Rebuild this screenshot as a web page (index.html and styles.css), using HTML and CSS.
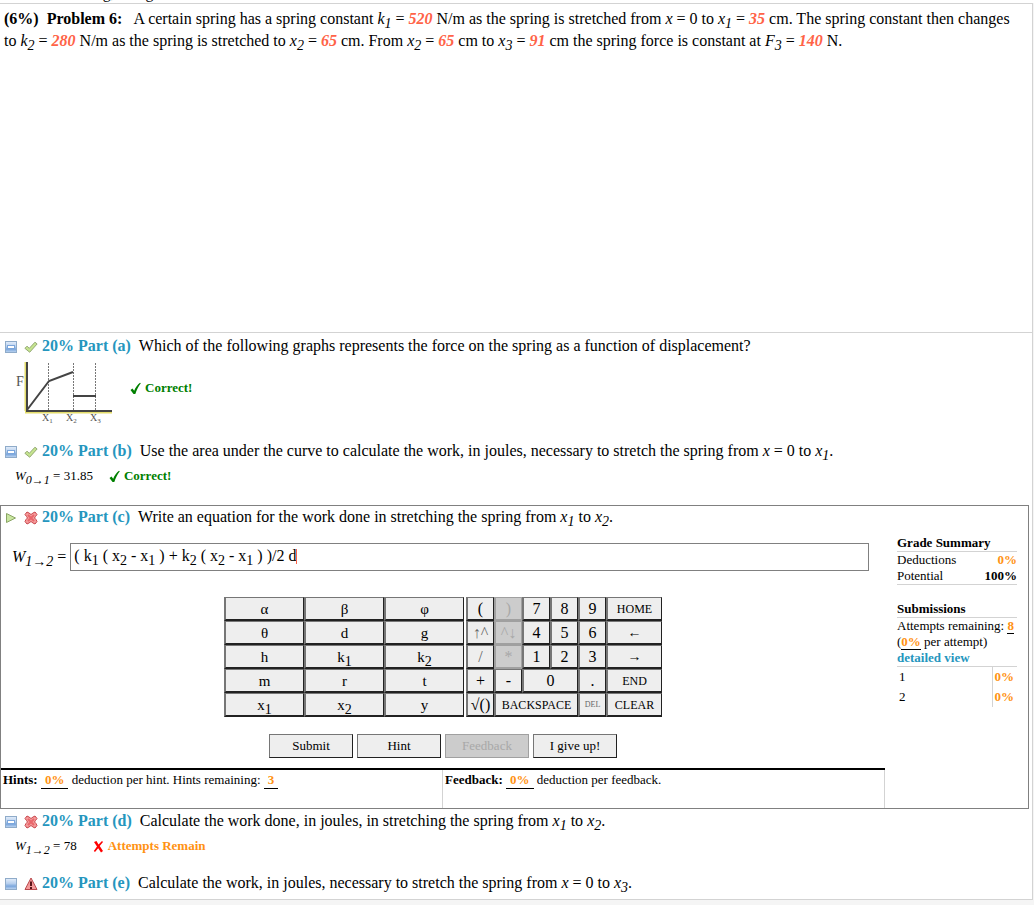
FILE: index.html
```html
<!DOCTYPE html>
<html lang="en">
<head>
<meta charset="utf-8">
<title>Problem 6</title>
<link rel="stylesheet" href="styles.css">
</head>
<body>
<svg class="defs" aria-hidden="true">
  <defs>
    <linearGradient id="boxfill" x1="0" y1="0" x2="0" y2="1"><stop offset="0" stop-color="#e4eefb"/><stop offset=".45" stop-color="#b8d0ee"/><stop offset=".7" stop-color="#7ba6dc"/><stop offset="1" stop-color="#c3d9f3"/></linearGradient>
    <symbol id="minus" viewBox="0 0 12 12"><rect x=".5" y=".5" width="11" height="11" fill="url(#boxfill)" stroke="#8fabc9"/><rect x="2.500" y="4.500" width="7" height="3" fill="#fff" stroke="#7ba6dc"/></symbol>
    <symbol id="blank" viewBox="0 0 12 12"><rect x=".5" y=".5" width="11" height="11" fill="url(#boxfill)" stroke="#8fabc9"/></symbol>
    <symbol id="check" viewBox="0 0 16 14"><path d="M1 8.500 3.500 6 6 8.500 12.500 1.500 15 3.500 6.500 13Z" fill="#c5e48f" stroke="#8a9f6a" stroke-linejoin="round"/></symbol>
    <symbol id="cross" viewBox="0 0 14 14"><path d="M1 3.500 3 1 5 2 7 3.500 9 2 11 1 13 3.500 11.500 5.500 10.500 7 12 8.500 13 10.500 11 13 9 12 7 10.500 5 12 3 13 1 10.500 2 8.500 3.500 7 2.500 5.500Z" fill="#f49a9a" stroke="#c9474d" stroke-linejoin="round"/><path d="M4 4l6 6M10 4l-6 6" stroke="#e8666b" stroke-width="2"/></symbol>
    <symbol id="play" viewBox="0 0 12 12"><path d="M1.500 1.500 10.500 6 1.500 10.500Z" fill="#c9e6a0" stroke="#8aa565" stroke-linejoin="round"/></symbol>
    <symbol id="warn" viewBox="0 0 14 14"><path d="M7 1 13 12.500H1Z" fill="#f49a9a" stroke="#b8474b" stroke-linejoin="round"/><path d="M7 4.500V9M7 10v2" stroke="#5a1518" stroke-width="2"/></symbol>
    <symbol id="tick" viewBox="0 0 11 13"><path d="M.5 8 2.500 6.500 4.200 8.800C5.500 5.500 7.500 2.500 10 .8L10.800 1.200C8.300 4.500 6.500 8.500 5.300 12H3.500Z" fill="#008000"/></symbol>
    <symbol id="wrong" viewBox="0 0 11 13"><path d="M1 2 3.500 1 5.500 4.500 9 1 10 2 6.700 6 10 11 8 12.500 5.200 8.200 2 12 .8 11 4 6.500Z" fill="#f00"/></symbol>
  </defs>
</svg>
<div class="previous">Stretching, using</div>
<main class="problem">
  <section class="statement"><b>(6%)&nbsp; Problem 6:</b> &nbsp; A certain spring has a spring constant <i>k<sub>1</sub></i> = <em>520</em> N/m as the spring is stretched from <i>x</i> = 0 to <i>x<sub>1</sub></i> = <em>35</em> cm. The spring constant then changes to <i>k<sub>2</sub></i> = <em>280</em> N/m as the spring is stretched to <i>x<sub>2</sub></i> = <em>65</em> cm. From <i>x<sub>2</sub></i> = <em>65</em> cm to <i>x<sub>3</sub></i> = <em>91</em> cm the spring force is constant at <i>F<sub>3</sub></i> = <em>140</em> N.</section>

  <section class="part part-a">
    <h2 class="part-head"><button class="toggle" aria-label="Collapse part a"><svg class="ic"><use href="#minus"/></svg></button><svg class="status"><use href="#check"/></svg><span class="label">20% Part (a)</span><span class="question">Which of the following graphs represents the force on the spring as a function of displacement?</span></h2>
    <div class="graph-row">
      <svg class="graph" viewBox="0 0 100 66" role="img" aria-label="Force versus displacement">
        <path d="M12 2V51M11 52H98" stroke="#e3dc6a" stroke-width="3" fill="none"/>
        <path d="M13 2V51H98" stroke="#444" stroke-width="2" fill="none"/>
        <path d="M34.500 3V50M59.500 3V50M81.500 3V50" stroke="#777" stroke-dasharray="2 1" fill="none"/>
        <path d="M13 50 35 21 59 12M59 36H82" stroke="#444" stroke-width="2" fill="none"/>
        <text x="2" y="26" class="g-f">F</text>
        <text x="28" y="61" class="g-x">X<tspan dy="2" class="g-s">1</tspan></text>
        <text x="52" y="61" class="g-x">X<tspan dy="2" class="g-s">2</tspan></text>
        <text x="76" y="61" class="g-x">X<tspan dy="2" class="g-s">3</tspan></text>
      </svg>
      <span class="verdict ok"><svg class="mark"><use href="#tick"/></svg>Correct!</span>
    </div>
  </section>

  <section class="part part-b">
    <h2 class="part-head"><button class="toggle" aria-label="Collapse part b"><svg class="ic"><use href="#minus"/></svg></button><svg class="status"><use href="#check"/></svg><span class="label">20% Part (b)</span><span class="question">Use the area under the curve to calculate the work, in joules, necessary to stretch the spring from <i>x</i> = 0 to <i>x<sub>1</sub></i>.</span></h2>
    <div class="answer"><span><i>W<sub>0→1</sub></i> = 31.85</span><span class="verdict ok"><svg class="mark"><use href="#tick"/></svg>Correct!</span></div>
  </section>

  <section class="part part-c">
    <h2 class="part-head"><button class="toggle" aria-label="Collapse part c"><svg class="ic"><use href="#play"/></svg></button><svg class="status"><use href="#cross"/></svg><span class="label">20% Part (c)</span><span class="question">Write an equation for the work done in stretching the spring from <i>x<sub>1</sub></i> to <i>x<sub>2</sub></i>.</span></h2>
    <div class="work">
      <div class="entry">
        <div class="equation"><span id="eq-label"><i>W<sub>1→2</sub></i> =</span><div class="field" role="textbox" tabindex="0" aria-labelledby="eq-label">( k<sub>1</sub> ( x<sub>2</sub> - x<sub>1</sub> ) + k<sub>2</sub> ( x<sub>2</sub> - x<sub>1</sub> ) )/2 d<span class="caret"></span></div></div>
        <div class="pads">
          <div class="pad symbols"><button>α</button><button>β</button><button>φ</button><button>θ</button><button>d</button><button>g</button><button>h</button><button><span>k<sub>1</sub></span></button><button><span>k<sub>2</sub></span></button><button>m</button><button>r</button><button>t</button><button><span>x<sub>1</sub></span></button><button><span>x<sub>2</sub></span></button><button>y</button></div>
          <div class="pad numbers"><button>(</button><button disabled>)</button><button>7</button><button>8</button><button>9</button><button class="word">HOME</button><button class="dim">↑^</button><button disabled>^↓</button><button>4</button><button>5</button><button>6</button><button class="arrow">←</button><button class="dim">/</button><button disabled>*</button><button>1</button><button>2</button><button>3</button><button class="arrow">→</button><button>+</button><button>-</button><button class="wide2">0</button><button>.</button><button class="word">END</button><button class="root">√()</button><button class="word wide3">BACKSPACE</button><button class="tiny">DEL</button><button class="word">CLEAR</button></div>
        </div>
        <div class="actions"><button>Submit</button><button>Hint</button><button disabled>Feedback</button><button>I give up!</button></div>
      </div>
      <aside class="summary">
        <h3>Grade Summary</h3>
        <div class="rows"><div><span>Deductions</span><b class="pct">0%</b></div><div><span>Potential</span><b>100%</b></div></div>
        <h3>Submissions</h3>
        <div class="attempts">Attempts remaining: <b class="pct line">8</b><br>(<b class="pct line">0%</b> per attempt)<br><a href="#detail">detailed view</a></div>
        <table class="tries"><tr><td>1</td><td class="pct">0%</td></tr><tr><td>2</td><td class="pct">0%</td></tr></table>
      </aside>
    </div>
    <div class="foot"><div><b>Hints:</b> <b class="pct blank">0%</b> deduction per hint. Hints remaining: <b class="pct blank">3</b></div><div><b>Feedback:</b> <b class="pct blank">0%</b> deduction per feedback.</div></div>
  </section>

  <section class="part part-d">
    <h2 class="part-head"><button class="toggle" aria-label="Collapse part d"><svg class="ic"><use href="#minus"/></svg></button><svg class="status"><use href="#cross"/></svg><span class="label">20% Part (d)</span><span class="question">Calculate the work done, in joules, in stretching the spring from <i>x<sub>1</sub></i> to <i>x<sub>2</sub></i>.</span></h2>
    <div class="answer"><span><i>W<sub>1→2</sub></i> = 78</span><span class="verdict remain"><svg class="mark"><use href="#wrong"/></svg>Attempts Remain</span></div>
  </section>

  <section class="part part-e">
    <h2 class="part-head"><button class="toggle" aria-label="Expand part e"><svg class="ic"><use href="#blank"/></svg></button><svg class="status"><use href="#warn"/></svg><span class="label">20% Part (e)</span><span class="question">Calculate the work, in joules, necessary to stretch the spring from <i>x</i> = 0 to <i>x<sub>3</sub></i>.</span></h2>
  </section>
</main>
</body>
</html>
```
FILE: styles.css
```css
* { box-sizing: border-box; }
body { margin: 0; background: #f5f5f5; color: #000; font: 15px/22px "Liberation Serif", "Times New Roman", serif; }
button { font: inherit; color: inherit; padding: 0; }
.defs { position: absolute; width: 0; height: 0; }
sub { font-size: 14px; line-height: 0; vertical-align: -4px; }
.previous { height: 3px; padding-left: 45px; display: flex; align-items: flex-end; font-size: 16px; line-height: 20px; overflow: hidden; background: #fff; }
.problem { background: #fff; border: 1px solid #d3d3d3; border-left: 0; margin-right: 1px; }
.statement { min-height: 329px; padding: 4px 16px 0 4px; font-size: 16px; border-bottom: 1px solid #d3d3d3; }
.statement em { color: #ff6347; font-weight: bold; }

.part-head { display: flex; align-items: center; margin: 0; font-size: 16px; line-height: 22px; font-weight: normal; }
.toggle { display: flex; width: 12px; height: 12px; margin: 2px 7px 0 5px; border: 0; background: none; }
.ic { width: 12px; height: 12px; }
.status { width: 14px; height: 14px; margin: 2px 4px 0 0; }
.label { color: #2596be; font-weight: bold; margin-right: 8px; }
.part-a { padding-top: 2px; min-height: 107px; }
.part-b { min-height: 65px; }
.part-d { padding-top: 1px; min-height: 63px; }
.part-e { min-height: 27px; }
.graph-row { display: flex; align-items: center; gap: 16px; padding: 3px 0 0 14px; }
.graph { width: 100px; height: 66px; margin-bottom: -2px; }
.graph text { fill: #555; }
.g-f { font-size: 14px; }
.g-x { font-size: 10px; }
.g-s { font-size: 7px; }
.verdict { display: flex; align-items: center; gap: 4px; font-size: 13px; font-weight: bold; }
.graph-row .verdict { margin-bottom: 8px; }
.mark { width: 11px; height: 13px; }
.ok { color: #008000; }
.remain { color: #ff9213; }
.answer { display: flex; align-items: center; gap: 16px; padding: 3px 0 0 15px; font-size: 13px; }
.answer sub { font-size: 12px; }

.part-c { border: 1px solid #808080; margin-right: 3px; }
.part-c .toggle { margin-left: 4px; }
.work { display: flex; align-items: flex-start; }
.entry { flex: 1; }
.equation { display: flex; align-items: center; gap: 4px; padding: 15px 0 0 11px; font-size: 16px; }
.field { flex: 1; height: 28px; padding: 0 3px; margin-right: 16px; border: 1px solid #808080; line-height: 24px; }
.caret { display: inline-block; width: 1px; height: 15px; background: #ff6347; vertical-align: -3px; }
.pads { display: flex; justify-content: center; gap: 2px; margin-top: 26px; }
.pad { display: grid; grid-auto-rows: 24px; }
.symbols { grid-template-columns: repeat(3, 80px); }
.numbers { grid-template-columns: repeat(5, 28px) 56px; font-size: 16px; }
.pad button, .actions button { border: 1px solid; border-width: 1px 1px 2px 2px; border-color: #767676 #212121 #212121 #767676; background: #eee; line-height: 20px; white-space: nowrap; }
.pad button:disabled, .actions button:disabled { background: #ccc; color: #a8a8a8; border-color: #a0a0a0; }
.pad .word { font-size: 12px; }
.pad .arrow { font-size: 14px; }
.pad .tiny { font-size: 8px; color: #666; }
.pad .dim { color: #666; }
.wide2 { grid-column: span 2; }
.wide3 { grid-column: span 3; }
.actions { display: flex; justify-content: center; gap: 4px; margin: 17px 0 10px; font-size: 13px; }
.actions button { width: 84px; height: 24px; border-width: 1px; }
.summary { width: 120px; margin: 7px 11px 0 12px; font-size: 13px; line-height: 16px; }
.summary h3 { margin: 0; font-size: 13px; line-height: 16px; border-bottom: 1px solid #d3d3d3; }
.rows { border-bottom: 1px solid #d3d3d3; margin-bottom: 16px; }
.rows div { display: flex; justify-content: space-between; }
.pct { color: #ff9213; font-weight: bold; }
.line { border-bottom: 1px solid #000; }
.summary a { color: #2596be; font-weight: bold; text-decoration: none; }
.tries { width: 100%; border-collapse: collapse; border-top: 1px solid #d3d3d3; }
.tries td { padding: 2px; height: 20px; }
.tries .pct { width: 25px; border-left: 1px solid #d3d3d3; }
.foot { display: grid; grid-template-columns: 1fr 1fr; margin-right: 143px; border-top: 2px solid #000; font-size: 13px; line-height: 16px; }
.foot > div { min-height: 38px; padding: 2px; border-right: 1px solid #d3d3d3; }
.blank { display: inline-block; padding: 0 4px; border-bottom: 1px solid #000; }
```
